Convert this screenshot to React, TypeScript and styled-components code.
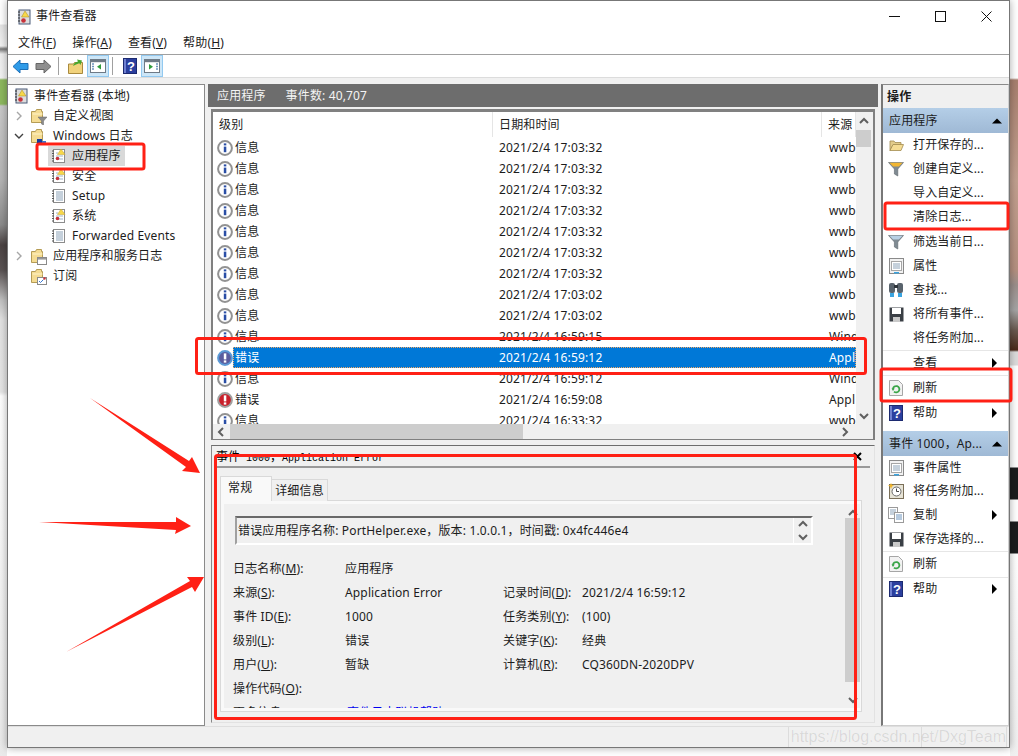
import React from "react";
import styled, { createGlobalStyle } from "styled-components";

const GlobalStyle = createGlobalStyle`
  html, body { margin: 0; padding: 0; background: #fff; }
  * { box-sizing: border-box; }
  #root { width: 1018px; height: 756px; overflow: hidden; }
  u { text-underline-offset: 1px; }
`;

const FONT = `"Noto Sans", "Noto Sans CJK SC", sans-serif`;

const Desktop = styled.div`
  position: relative;
  display: flex;
  width: 1018px;
  height: 756px;
  overflow: hidden;
  font-family: ${FONT};
  font-size: 12px;
  line-height: 16px;
  letter-spacing: 0.15px;
  color: #1c1c1c;
  background: #fff;
`;
const LeftStrip = styled.div`
  width: 7px;
  height: 756px;
  background: linear-gradient(
    #fff 0, #fff 24px, #e4e4e4 25px, #f2f2f2 46px, #777 49px, #eee 54px, #f3f3f3 78px,
    #8db85e 80px, #8db85e 104px, #c9c9c9 106px, #b5b5b5 180px, #8b8b8b 225px, #4c4444 245px,
    #5a5353 270px, #c0c0c0 300px, #e3e3e3 320px, #e6e6e6 392px, #fff 396px, #eaeaea 756px
  );
`;
const RightStrip = styled.div`
  width: 8px;
  height: 756px;
  background: linear-gradient(
    #fff 0, #fff 78px, #a87f6e 80px, #c2a08f 180px, #b59080 270px, #9c8f8b 285px, #a5a5a5 310px,
    #6a5a50 330px, #4b2a1a 350px, #dcdcdc 352px, #dcdcdc 365px, #fff 366px, #fff 467px, #1b1c1e 468px,
    #1b1c1e 499px, #fff 500px, #fff 521px, #1b1c1e 522px, #1b1c1e 553px, #fff 554px, #f0f0f0 756px
  );
`;
const Window = styled.div`
  position: relative;
  z-index: 1;
  display: flex;
  flex-direction: column;
  width: 1003px;
  height: 748px;
  background: #f0f0f0;
  border: 1px solid #777;
  box-shadow: 0 0 8px rgba(0, 0, 0, 0.35);
`;
const TitleBar = styled.div`
  display: flex;
  align-items: center;
  height: 31px;
  padding-left: 9px;
  background: #fff;
`;
const TitleText = styled.span`
  flex: 1;
  margin: -2px 0 0 5px;
`;
const WinButton = styled.div`
  display: flex;
  width: 46px;
  height: 31px;
  align-items: center;
  justify-content: center;
`;
const MenuBar = styled.div`
  display: flex;
  align-items: center;
  height: 22px;
  padding-left: 10px;
  gap: 16px;
  background: #fff;
`;
const ToolBar = styled.div`
  display: flex;
  align-items: center;
  height: 24px;
  padding-left: 1px;
  background: #fff;
  border-top: 1px solid #a0a0a0;
  border-bottom: 1px solid #dcdcdc;
`;
const ToolIcon = styled.div<{ $on?: boolean }>`
  display: flex;
  align-items: center;
  justify-content: center;
  width: ${(p) => (p.$on ? 22 : 23)}px;
  height: 22px;
  background: ${(p) => (p.$on ? "#cde6f7" : "transparent")};
  border: 1px solid ${(p) => (p.$on ? "#92c9f0" : "transparent")};
`;
const ToolSep = styled.div`
  width: 1px;
  height: 18px;
  margin: 0 5px 0 3px;
  background: #a0a0a0;
`;
const Main = styled.div`
  display: grid;
  grid-template-columns: 197px 670px 128px;
  column-gap: 3px;
  height: 642px;
  margin-top: 6px;
`;
const TreePane = styled.div`
  padding-top: 1px;
  background: #fff;
  border: 1px solid #8a8a8a;
  border-left: none;
`;
const TreeRow = styled.div<{ $indent: number }>`
  display: flex;
  align-items: center;
  height: 20px;
  padding-left: ${(p) => p.$indent}px;
  gap: 6px;
`;
const Chevron = styled.div`
  display: flex;
  width: 12px;
  justify-content: center;
`;
const TreeSelected = styled.div`
  display: flex;
  align-items: center;
  height: 20px;
  gap: 6px;
  margin-left: -3px;
  padding: 0 4px 0 3px;
  background: #d9d9d9;
`;
const Center = styled.div`
  display: flex;
  flex-direction: column;
`;
const ContentBar = styled.div`
  display: flex;
  align-items: center;
  height: 23px;
  padding: 1px 0 0 9px;
  gap: 20px;
  color: #f4f4f4;
  background: #6d6d6d;
`;
const ListFrame = styled.div`
  display: grid;
  grid-template-columns: 643px 15px;
  grid-template-rows: 312px 15px;
  height: 331px;
  margin: 2px 3px 0 3px;
  background: #f0f0f0;
  border: 2px solid #808080;
  border-top-width: 3px;
  border-bottom-width: 1px;
`;
const ListMain = styled.div`
  overflow: hidden;
  background: #fff;
`;
const ListHead = styled.div`
  display: grid;
  grid-template-columns: 280px 329px 34px;
  height: 25px;
`;
const HeadCell = styled.div`
  padding: 5px 0 0 6px;
  overflow: hidden;
  white-space: nowrap;
  border-right: 1px solid #e5e5e5;
`;
const Row = styled.div`
  display: flex;
  height: 21px;
  padding-left: 4px;
  align-items: center;
`;
const RowBody = styled.div<{ $sel?: boolean }>`
  display: grid;
  flex: 1;
  grid-template-columns: 264px 330px 34px;
  height: 21px;
  padding-left: 2px;
  align-items: center;
  white-space: nowrap;
  overflow: hidden;
  color: ${(p) => (p.$sel ? "#fff" : "#1c1c1c")};
  background: ${(p) => (p.$sel ? "#0078d7" : "transparent")};
  outline: ${(p) => (p.$sel ? "1px dotted #f0a868" : "none")};
  outline-offset: -1px;
`;
const VScroll = styled.div`
  display: flex;
  flex-direction: column;
  align-items: center;
  background: #f0f0f0;
`;
const ScrollEnd = styled.div`
  display: flex;
  width: 15px;
  height: 17px;
  align-items: center;
  justify-content: center;
`;
const ScrollThumb = styled.div<{ $h: number; $top: number }>`
  width: 15px;
  height: ${(p) => p.$h}px;
  margin-top: ${(p) => p.$top}px;
  background: #cdcdcd;
`;
const ScrollTrack = styled.div`
  flex: 1;
`;
const HScroll = styled.div`
  display: flex;
  align-items: center;
  height: 15px;
  padding-right: 4px;
`;
const HThumb = styled.div`
  width: 293px;
  height: 15px;
  margin-left: 2px;
  background: #cdcdcd;
`;
const Detail = styled.div`
  display: flex;
  flex-direction: column;
  height: 278px;
  margin: 5px 3px 3px 3px;
  background: #f0f0f0;
  border: 1px solid #e2e2e2;
  border-top-color: #6d6d6d;
  border-left-color: #888;
`;
const DetailHead = styled.div`
  display: flex;
  justify-content: space-between;
  align-items: center;
  height: 22px;
  margin: 0 4px 0 2px;
  padding: 2px 3px 0 2px;
  font-size: 10px;
  letter-spacing: 0;
  color: #000;
  border-bottom: 2px solid #999;
`;
const DetailTitle = styled.span`
  font-family: "Liberation Mono", "Noto Sans CJK SC", monospace;
`;
const DetailCjk = styled.span`
  font-size: 12px;
  font-family: "Noto Sans CJK SC", sans-serif;
`;
const CloseMark = styled.span`
  display: flex;
  margin: -2px 5px 0 0;
`;
const TabRow = styled.div`
  display: flex;
  align-items: flex-end;
  height: 25px;
  margin: 7px 0 0 8px;
`;
const Tab = styled.div<{ $on?: boolean }>`
  position: relative;
  top: 1px;
  display: flex;
  align-items: center;
  justify-content: ${(p) => (p.$on ? "flex-start" : "center")};
  width: ${(p) => (p.$on ? 52 : 56)}px;
  height: ${(p) => (p.$on ? 25 : 22)}px;
  padding: ${(p) => (p.$on ? "0 0 2px 7px" : "0")};
  background: ${(p) => (p.$on ? "#f9f9f9" : "#f0f0f0")};
  border: 1px solid #d9d9d9;
  border-bottom: none;
  border-left-width: ${(p) => (p.$on ? 1 : 0)}px;
`;
const TabPanel = styled.div`
  display: grid;
  grid-template-columns: 621px 15px;
  width: 642px;
  height: 212px;
  margin-left: 8px;
  padding: 3px 0 3px 3px;
  background: #f9f9f9;
  border: 1px solid #d9d9d9;
`;
const PanelBody = styled.div`
  height: 204px;
  overflow: hidden;
  padding: 12px 0 0 11px;
  background: #f0f0f0;
`;
const MessageBox = styled.div`
  display: flex;
  width: 578px;
  height: 29px;
  align-items: center;
  padding-left: 1px;
  border: 2px solid #fff;
  border-top-color: #696969;
  border-left-color: #a0a0a0;
`;
const MessageText = styled.span`
  flex: 1;
  white-space: nowrap;
`;
const Spinner = styled.div`
  display: flex;
  flex-direction: column;
  width: 18px;
  height: 25px;
  align-items: center;
  justify-content: space-around;
  border-left: 1px solid #fff;
`;
const Fields = styled.div`
  display: grid;
  grid-template-columns: 112px 158px 79px 1fr;
  grid-auto-rows: 24px;
  margin: 12px 0 0 -2px;
  align-items: center;
  white-space: nowrap;
`;
const HelpLink = styled.span`
  margin-left: 2px;
  color: #0000ee;
`;
const PanelScroll = styled(VScroll)`
  width: 15px;
  background: #f0f0f0;
`;
const Actions = styled.div`
  display: flex;
  flex-direction: column;
  background: #fff;
  border-left: 2px solid #777;
  border-top: 1px solid #8a8a8a;
  border-right: 1px solid #d0d0d0;
  border-bottom: 1px solid #d0d0d0;
`;
const ActionsHead = styled.div`
  display: flex;
  align-items: center;
  height: 23px;
  padding-left: 4px;
  font-weight: 700;
  background: #f0f0f0;
`;
const SectionHead = styled.div`
  display: flex;
  align-items: center;
  justify-content: space-between;
  height: 25px;
  padding: 0 6px 0 6px;
  white-space: nowrap;
  background: linear-gradient(#b4cee7, #9fb9d5);
`;
const ActionItem = styled.div<{ $sep?: boolean; $extra?: number }>`
  display: flex;
  align-items: center;
  height: ${(p) => 24 + (p.$extra ?? 0)}px;
  padding: 0 8px 0 5px;
  gap: 9px;
  white-space: nowrap;
  ${(p) => (p.$sep ? "box-shadow: inset 0 1px 0 #e6e6e6;" : "")}
`;
const ActionText = styled.span`
  flex: 1;
`;
const IconBox = styled.div`
  display: flex;
  width: 16px;
  height: 16px;
  justify-content: center;
  align-items: center;
`;
const SectionGap = styled.div`
  height: 6px;
`;
const StatusBar = styled.div`
  position: relative;
  display: flex;
  justify-content: flex-end;
  height: 21px;
  padding-right: 2px;
  background: #f0f0f0;
  border-top: 1px solid #dedede;
`;
const StatusCell = styled.div<{ $w: number }>`
  width: ${(p) => p.$w}px;
  height: 20px;
  border-left: 1px solid #dcdcdc;
  border-right: 1px solid transparent;
`;
const StatusEnd = styled.div`
  width: 1px;
  height: 20px;
  background: #dcdcdc;
`;
const Watermark = styled.div`
  position: absolute;
  right: 3px;
  top: -1px;
  font-family: "Liberation Sans", sans-serif;
  font-size: 16px;
  line-height: 22px;
  letter-spacing: 0;
  white-space: nowrap;
  color: rgba(0, 0, 0, 0.1);
`;
const Overlay = styled.svg`
  position: absolute;
  left: 0;
  top: 0;
  z-index: 2;
  pointer-events: none;
`;

const Arrow = ({ d, color = "#606060" }: { d: "u" | "d" | "l" | "r"; color?: string }) => {
  const paths = { u: "M1 7 L5 3 L9 7", d: "M1 3 L5 7 L9 3", l: "M7 1 L3 5 L7 9", r: "M3 1 L7 5 L3 9" };
  return (
    <svg width="10" height="10" viewBox="0 0 10 10">
      <path d={paths[d]} fill="none" stroke={color} strokeWidth="2" />
    </svg>
  );
};

const InfoIcon = () => (
  <svg width="16" height="16" viewBox="0 0 16 16">
    <circle cx="8" cy="8" r="6.9" fill="#fff" stroke="#929292" strokeWidth="2" />
    <rect x="6.8" y="6.6" width="2.5" height="5.6" fill="#2a4ea6" />
    <rect x="6.8" y="3.4" width="2.5" height="2" fill="#2a4ea6" />
  </svg>
);
const ErrorIcon = ({ sel }: { sel?: boolean }) => (
  <svg width="16" height="16" viewBox="0 0 16 16">
    <circle cx="8" cy="8" r="6.9" fill={sel ? "#5a5c9e" : "#c9202b"} stroke={sel ? "#5b9ad6" : "#a0a0a0"} strokeWidth="2" />
    <rect x="6.8" y="3.4" width="2.5" height="6" fill="#fff" />
    <rect x="6.8" y="10.4" width="2.5" height="2.2" fill="#fff" />
  </svg>
);
const LogIcon = ({ warn }: { warn?: boolean }) => (
  <svg width="15" height="16" viewBox="0 0 15 16">
    <rect x="2.5" y="1.5" width="11" height="13" fill="#fff" stroke="#8c8c8c" />
    <path d="M1 3h2M1 5.5h2M1 8h2M1 10.5h2M1 13h2" stroke="#555" />
    {warn ? (
      <>
        <path d="M5 5h2M5 8h7M5 11h7" stroke="#9fb4c8" />
        <path d="M10 1 L14 6.5 H6.5Z" fill="#f7d84a" stroke="#c2a233" strokeWidth=".5" />
        <circle cx="6.5" cy="10.5" r="1.8" fill="#c8323a" />
      </>
    ) : (
      <path d="M5 4h7M5 6h7M5 8h7M5 10h7M5 12h7" stroke="#8ba2b8" />
    )}
  </svg>
);
const AppIcon = () => (
  <svg width="14" height="16" viewBox="0 0 14 16">
    <rect x="2" y="1" width="11" height="14" fill="#ddd" stroke="#4a5a78" />
    <path d="M1 3h2M1 6h2M1 9h2M1 12h2" stroke="#333" />
    <path d="M8 2 L12 8 H4.5Z" fill="#f7d84a" stroke="#a58a20" strokeWidth=".5" />
    <circle cx="6.5" cy="11.5" r="2.3" fill="#c8323a" />
  </svg>
);
const Folder = ({ kind }: { kind: "filter" | "win" | "app" | "sub" }) => (
  <svg width="16" height="17" viewBox="0 0 16 17">
    <path d="M.5 3.5h4l1-2h5v2h1v11h-11z" fill="#f5dc93" stroke="#b59c55" />
    <path d="M1.5 6h10" stroke="#fff4c8" />
    {kind === "filter" && <path d="M7 9h9l-3.5 4v4l-2-1v-3z" fill="#8b8b8b" stroke="#666" strokeWidth=".5" />}
    {kind === "win" && (
      <>
        <rect x="6" y="11" width="5" height="5" fill="#123a9c" />
        <rect x="11" y="13" width="4" height="3" fill="#3a78d0" />
      </>
    )}
    {kind === "app" && (
      <>
        <rect x="6.5" y="9.5" width="9" height="7" fill="#fff" stroke="#8a8a8a" />
        <rect x="7" y="10" width="8" height="1.6" fill="#9a9a9a" />
      </>
    )}
    {kind === "sub" && (
      <>
        <rect x="6.5" y="9.5" width="9" height="7" fill="#fff" stroke="#8a8a8a" />
        <path d="M8 13l1.5 1.5 3-3" fill="none" stroke="#3a78d0" />
        <circle cx="13.5" cy="10.5" r="1.2" fill="#c8323a" />
      </>
    )}
  </svg>
);
const TreeChevron = ({ open }: { open?: boolean }) => (
  <svg width="10" height="10" viewBox="0 0 10 10">
    <path
      d={open ? "M1 3 L5 7 L9 3" : "M3 1 L7 5 L3 9"}
      fill="none"
      stroke={open ? "#404040" : "#a6a6a6"}
      strokeWidth="1.4"
    />
  </svg>
);
const BackIcon = () => (
  <svg width="17" height="15" viewBox="0 0 17 15">
    <path d="M1 7.5 L8 1 V4.5 H16 V10.5 H8 V14Z" fill="#2f9be8" stroke="#1b6fb8" strokeLinejoin="round" />
  </svg>
);
const ForwardIcon = () => (
  <svg width="17" height="15" viewBox="0 0 17 15">
    <path d="M16 7.5 L9 1 V4.5 H1 V10.5 H9 V14Z" fill="#8f8f8f" stroke="#666" strokeLinejoin="round" />
  </svg>
);
const UpFolderIcon = () => (
  <svg width="16" height="16" viewBox="0 0 16 16">
    <path d="M.5 6h5l1-1.5h8v11h-14z" fill="#f1d27c" stroke="#a98a3e" />
    <path d="M5 8 C6 5 8 4 10 3.5 L9 1.5 L14 2.5 L12.5 7 L11.3 5.2 C9 6 7 7 5 8Z" fill="#49a72f" />
  </svg>
);
const PaneIcon = ({ side }: { side: "l" | "r" }) => (
  <svg width="16" height="14" viewBox="0 0 16 14">
    <rect x=".5" y=".5" width="15" height="13" fill="#fff" stroke="#6e7a86" />
    <rect x="1" y="1" width="14" height="2.2" fill="#6e7a86" />
    {side === "l" ? (
      <>
        <path d="M2 5h2M2 7.5h2M2 10h2" stroke="#6d94bd" strokeWidth="1.4" />
        <path d="M11 5 L7 7.8 L11 10.6Z" fill="#2f9c3c" />
      </>
    ) : (
      <>
        <path d="M5 5 L9 7.8 L5 10.6Z" fill="#2f9c3c" />
        <path d="M12 5h2M12 7.5h2M12 10h2" stroke="#6d94bd" strokeWidth="1.4" />
      </>
    )}
  </svg>
);
const HelpIcon = () => (
  <svg width="14" height="16" viewBox="0 0 14 16">
    <rect x=".5" y=".5" width="13" height="15" fill="#2b3f9e" stroke="#1c2a70" />
    <rect x="1" y="1" width="2" height="14" fill="#6f80d0" />
    <text x="8" y="13" fontSize="13" fontWeight="700" fontFamily="Liberation Sans" textAnchor="middle" fill="#fff">
      ?
    </text>
  </svg>
);
const OpenFolderIcon = () => (
  <svg width="15" height="14" viewBox="0 0 15 14">
    <path d="M1 3h4l1 1.5h6V7H4l-3 5.5z" fill="#e3cc8a" stroke="#a28b50" strokeWidth=".8" />
    <path d="M1 12.5 L4 6.5 H14.5 L12 12.5Z" fill="#f5dc93" stroke="#a28b50" strokeWidth=".8" />
  </svg>
);
const FunnelIcon = ({ color }: { color: string }) => (
  <svg width="16" height="16" viewBox="0 0 16 16">
    <path d="M.5 1.5h15L9.8 8v7l-3.4-2V8z" fill="#7f8a92" stroke="#5e666c" strokeWidth=".6" />
    <path d="M1.5 1.8h13L11 5.5H5z" fill={color} />
  </svg>
);
const PropsIcon = () => (
  <svg width="15" height="16" viewBox="0 0 15 16">
    <rect x=".5" y=".5" width="14" height="15" fill="#f2f2f2" stroke="#8a8a8a" />
    <rect x="2.5" y="3.5" width="10" height="9" fill="#fff" stroke="#a6a6a6" />
    <path d="M4 6h7M4 8h7M4 10h7" stroke="#8ba2b8" />
    <rect x="5" y="14" width="5" height="1.5" fill="#3aa4e0" />
  </svg>
);
const BinocularsIcon = () => (
  <svg width="16" height="16" viewBox="0 0 16 16">
    <rect x="1" y="1" width="6" height="10" rx="2" fill="#59636c" />
    <rect x="9" y="1" width="6" height="10" rx="2" fill="#59636c" />
    <rect x="6" y="3" width="4" height="3" fill="#2e353b" />
    <rect x="2" y="11" width="4" height="4" fill="#3aa4e0" />
    <rect x="10" y="11" width="4" height="4" fill="#3aa4e0" />
  </svg>
);
const SaveIcon = () => (
  <svg width="15" height="15" viewBox="0 0 15 15">
    <path d="M.5.5h14v14h-14z" fill="#3a3f45" />
    <rect x="3" y="1" width="9" height="6" fill="#fff" />
    <rect x="4" y="10" width="7" height="5" fill="#c9c9c9" />
  </svg>
);
const RefreshIcon = () => (
  <svg width="14" height="16" viewBox="0 0 14 16">
    <path d="M.5.5h9l4 4v11H.5z" fill="#f2f2f2" stroke="#a6a6a6" />
    <path d="M4 9a3.2 3.2 0 1 1 1 2.6" fill="none" stroke="#3aa548" strokeWidth="1.8" />
    <path d="M2.5 8.5h3.2L4 11z" fill="#3aa548" />
  </svg>
);
const TaskIcon = () => (
  <svg width="16" height="16" viewBox="0 0 16 16">
    <rect x="1.5" y="1.5" width="14" height="14" fill="#e6e3d6" stroke="#7a6f58" />
    <circle cx="8.5" cy="8.5" r="4.5" fill="#fff" stroke="#6a6a6a" />
    <path d="M8.5 5.5v3h2.5" fill="none" stroke="#444" />
    <path d="M3 0l1 2 2 .5-2 1L3 6 2 3.5 0 2.5 2 2z" fill="#f0b429" />
  </svg>
);
const CopyIcon = () => (
  <svg width="16" height="16" viewBox="0 0 16 16">
    <rect x=".5" y=".5" width="9" height="11" fill="#fff" stroke="#9a9a9a" />
    <path d="M2 3h6M2 5h6M2 7h6" stroke="#8ba2b8" />
    <rect x="6.5" y="5.5" width="9" height="10" fill="#fff" stroke="#9a9a9a" />
    <path d="M8 8h6M8 10h6M8 12h6" stroke="#6d94bd" />
  </svg>
);
const Tri = ({ d }: { d: "up" | "right" }) => (
  <svg width="10" height="10" viewBox="0 0 10 10">
    <path d={d === "up" ? "M0 7.5 L5 2.5 L10 7.5Z" : "M2 0 L7 5 L2 10Z"} fill="#000" />
  </svg>
);

const rows: { level: string; time: string; src: string; icon: "i" | "e" | "s" }[] = [
  ...Array.from({ length: 7 }, () => ({ level: "信息", time: "2021/2/4 17:03:32", src: "wwb", icon: "i" as const })),
  ...Array.from({ length: 2 }, () => ({ level: "信息", time: "2021/2/4 17:03:02", src: "wwb", icon: "i" as const })),
  { level: "信息", time: "2021/2/4 16:59:15", src: "Wind", icon: "i" },
  { level: "错误", time: "2021/2/4 16:59:12", src: "Appl", icon: "s" },
  { level: "信息", time: "2021/2/4 16:59:12", src: "Wind", icon: "i" },
  { level: "错误", time: "2021/2/4 16:59:08", src: "Appl", icon: "e" },
  { level: "信息", time: "2021/2/4 16:33:32", src: "wwb", icon: "i" },
];

const Lbl = ({ t, k, end = "):" }: { t: string; k: string; end?: string }) => (
  <span>
    {t}(<u>{k}</u>{end}
  </span>
);

const Empty = () => <IconBox />;

export default function App() {
  return (
    <Desktop>
      <GlobalStyle />
      <LeftStrip />
      <Window>
        <TitleBar>
          <AppIcon />
          <TitleText>事件查看器</TitleText>
          <WinButton>
            <svg width="11" height="11" viewBox="0 0 11 11"><path d="M0 5.5h11" stroke="#111" /></svg>
          </WinButton>
          <WinButton>
            <svg width="11" height="11" viewBox="0 0 11 11"><rect x=".5" y=".5" width="10" height="10" fill="none" stroke="#111" /></svg>
          </WinButton>
          <WinButton>
            <svg width="11" height="11" viewBox="0 0 11 11"><path d="M.5.5l10 10M10.5.5l-10 10" stroke="#111" /></svg>
          </WinButton>
        </TitleBar>
        <MenuBar>
          <Lbl t="文件" k="F" end=")" />
          <Lbl t="操作" k="A" end=")" />
          <Lbl t="查看" k="V" end=")" />
          <Lbl t="帮助" k="H" end=")" />
        </MenuBar>
        <ToolBar>
          <ToolIcon><BackIcon /></ToolIcon>
          <ToolIcon><ForwardIcon /></ToolIcon>
          <ToolSep />
          <ToolIcon><UpFolderIcon /></ToolIcon>
          <ToolIcon $on><PaneIcon side="l" /></ToolIcon>
          <ToolSep />
          <ToolIcon><HelpIcon /></ToolIcon>
          <ToolIcon $on><PaneIcon side="r" /></ToolIcon>
        </ToolBar>
        <Main>
          <TreePane>
            <TreeRow $indent={6}><AppIcon /><span>事件查看器 (本地)</span></TreeRow>
            <TreeRow $indent={5}><Chevron><TreeChevron /></Chevron><Folder kind="filter" /><span>自定义视图</span></TreeRow>
            <TreeRow $indent={5}><Chevron><TreeChevron open /></Chevron><Folder kind="win" /><span>Windows 日志</span></TreeRow>
            <TreeRow $indent={43}><TreeSelected><LogIcon warn /><span>应用程序</span></TreeSelected></TreeRow>
            <TreeRow $indent={43}><LogIcon warn /><span>安全</span></TreeRow>
            <TreeRow $indent={43}><LogIcon /><span>Setup</span></TreeRow>
            <TreeRow $indent={43}><LogIcon warn /><span>系统</span></TreeRow>
            <TreeRow $indent={43}><LogIcon /><span>Forwarded Events</span></TreeRow>
            <TreeRow $indent={5}><Chevron><TreeChevron /></Chevron><Folder kind="app" /><span>应用程序和服务日志</span></TreeRow>
            <TreeRow $indent={23}><Folder kind="sub" /><span>订阅</span></TreeRow>
          </TreePane>
          <Center>
            <ContentBar><span>应用程序</span><span>事件数: 40,707</span></ContentBar>
            <ListFrame>
              <ListMain>
                <ListHead>
                  <HeadCell>级别</HeadCell>
                  <HeadCell>日期和时间</HeadCell>
                  <HeadCell>来源</HeadCell>
                </ListHead>
                {rows.map((r, i) => (
                  <Row key={i}>
                    {r.icon === "i" ? <InfoIcon /> : <ErrorIcon sel={r.icon === "s"} />}
                    <RowBody $sel={r.icon === "s"}>
                      <span>{r.level}</span>
                      <span>{r.time}</span>
                      <span>{r.src}</span>
                    </RowBody>
                  </Row>
                ))}
              </ListMain>
              <VScroll>
                <ScrollEnd><Arrow d="u" /></ScrollEnd>
                <ScrollThumb $h={17} $top={1} />
                <ScrollTrack />
                <ScrollEnd><Arrow d="d" /></ScrollEnd>
              </VScroll>
              <HScroll>
                <ScrollEnd><Arrow d="l" /></ScrollEnd>
                <HThumb />
                <ScrollTrack />
                <ScrollEnd><Arrow d="r" /></ScrollEnd>
              </HScroll>
            </ListFrame>
            <Detail>
              <DetailHead>
                <DetailTitle><DetailCjk>事件</DetailCjk> 1000<DetailCjk>，</DetailCjk>Application Error</DetailTitle>
                <CloseMark>
                  <svg width="9" height="9" viewBox="0 0 9 9"><path d="M1 1l7 7M8 1l-7 7" stroke="#000" strokeWidth="2" /></svg>
                </CloseMark>
              </DetailHead>
              <TabRow>
                <Tab $on>常规</Tab>
                <Tab>详细信息</Tab>
              </TabRow>
              <TabPanel>
                <PanelBody>
                  <MessageBox>
                    <MessageText>错误应用程序名称: PortHelper.exe，版本: 1.0.0.1，时间戳: 0x4fc446e4</MessageText>
                    <Spinner><Arrow d="u" /><Arrow d="d" /></Spinner>
                  </MessageBox>
                  <Fields>
                    <Lbl t="日志名称" k="M" /><span>应用程序</span><span /><span />
                    <Lbl t="来源" k="S" /><span>Application Error</span><Lbl t="记录时间" k="D" /><span>2021/2/4 16:59:12</span>
                    <Lbl t="事件 ID" k="E" /><span>1000</span><Lbl t="任务类别" k="Y" /><span>(100)</span>
                    <Lbl t="级别" k="L" /><span>错误</span><Lbl t="关键字" k="K" /><span>经典</span>
                    <Lbl t="用户" k="U" /><span>暂缺</span><Lbl t="计算机" k="R" /><span>CQ360DN-2020DPV</span>
                    <Lbl t="操作代码" k="O" /><span /><span /><span />
                    <Lbl t="更多信息" k="I" /><HelpLink>事件日志联机帮助</HelpLink><span /><span />
                  </Fields>
                </PanelBody>
                <PanelScroll>
                  <ScrollEnd><Arrow d="u" /></ScrollEnd>
                  <ScrollThumb $h={164} $top={-3} />
                  <ScrollTrack />
                  <ScrollEnd><Arrow d="d" /></ScrollEnd>
                </PanelScroll>
              </TabPanel>
            </Detail>
          </Center>
          <Actions>
            <ActionsHead>操作</ActionsHead>
            <SectionHead>应用程序<Tri d="up" /></SectionHead>
            <ActionItem><IconBox><OpenFolderIcon /></IconBox><ActionText>打开保存的...</ActionText></ActionItem>
            <ActionItem><IconBox><FunnelIcon color="#f2b632" /></IconBox><ActionText>创建自定义...</ActionText></ActionItem>
            <ActionItem><Empty /><ActionText>导入自定义...</ActionText></ActionItem>
            <ActionItem><Empty /><ActionText>清除日志...</ActionText></ActionItem>
            <ActionItem $extra={1}><IconBox><FunnelIcon color="#b8d0e4" /></IconBox><ActionText>筛选当前日...</ActionText></ActionItem>
            <ActionItem><IconBox><PropsIcon /></IconBox><ActionText>属性</ActionText></ActionItem>
            <ActionItem><IconBox><BinocularsIcon /></IconBox><ActionText>查找...</ActionText></ActionItem>
            <ActionItem><IconBox><SaveIcon /></IconBox><ActionText>将所有事件...</ActionText></ActionItem>
            <ActionItem><Empty /><ActionText>将任务附加...</ActionText></ActionItem>
            <ActionItem $sep $extra={1}><Empty /><ActionText>查看</ActionText><Tri d="right" /></ActionItem>
            <ActionItem $sep $extra={2}><IconBox><RefreshIcon /></IconBox><ActionText>刷新</ActionText></ActionItem>
            <ActionItem><IconBox><HelpIcon /></IconBox><ActionText>帮助</ActionText><Tri d="right" /></ActionItem>
            <SectionGap />
            <SectionHead>事件 1000，Ap...<Tri d="up" /></SectionHead>
            <ActionItem $extra={-1}><IconBox><PropsIcon /></IconBox><ActionText>事件属性</ActionText></ActionItem>
            <ActionItem><IconBox><TaskIcon /></IconBox><ActionText>将任务附加...</ActionText></ActionItem>
            <ActionItem><IconBox><CopyIcon /></IconBox><ActionText>复制</ActionText><Tri d="right" /></ActionItem>
            <ActionItem><IconBox><SaveIcon /></IconBox><ActionText>保存选择的...</ActionText></ActionItem>
            <ActionItem $sep $extra={2}><IconBox><RefreshIcon /></IconBox><ActionText>刷新</ActionText></ActionItem>
            <ActionItem $sep><IconBox><HelpIcon /></IconBox><ActionText>帮助</ActionText><Tri d="right" /></ActionItem>
          </Actions>
        </Main>
        <StatusBar>
          <StatusCell $w={133} />
          <StatusCell $w={85} />
          <StatusEnd />
          <Watermark>https://blog.csdn.net/DxgTeam</Watermark>
        </StatusBar>
      </Window>
      <RightStrip />
      <Overlay width="1018" height="756" viewBox="0 0 1018 756">
        <g fill="none" stroke="#ff2015" strokeWidth="3">
          <rect x="37" y="144" width="107" height="25" rx="2" />
          <rect x="885" y="203" width="123" height="26" rx="2" />
          <rect x="881" y="369" width="130" height="32" rx="2" />
          <rect x="196.5" y="338.5" width="669" height="35" rx="2" />
          <rect x="215.5" y="455.5" width="640" height="263" rx="2" />
        </g>
        <g fill="#ff2015">
          <polygon points="90,398 189,461 192,457 200,473 182,471 186,467" />
          <polygon points="39,522 176,522 176,517 191,526 175,534 176,530" />
          <polygon points="66,652 190,581 187,577 204,577 195,592 192,587" />
        </g>
      </Overlay>
    </Desktop>
  );
}
